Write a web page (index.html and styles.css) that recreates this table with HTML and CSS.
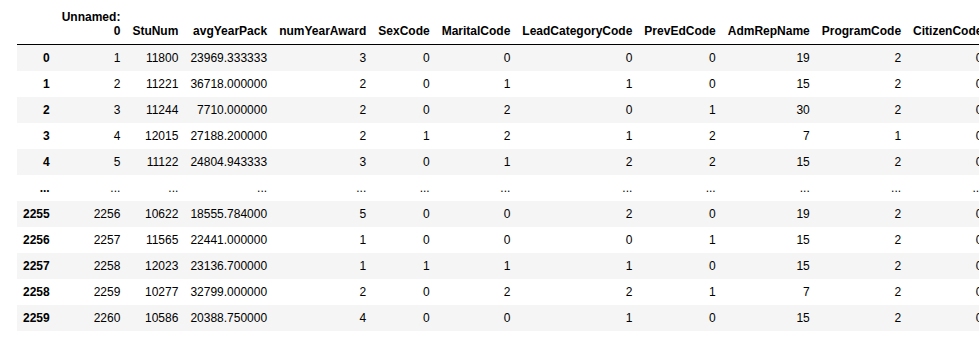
FILE: index.html
```html
<!DOCTYPE html>
<html>
<head>
<meta charset="utf-8">
<link rel="stylesheet" href="styles.css">
</head>
<body>
<div class="output">
<table class="dataframe">
<thead>
<tr><th></th><th>Unnamed:<br>0</th><th>StuNum</th><th>avgYearPack</th><th>numYearAward</th><th>SexCode</th><th>MaritalCode</th><th>LeadCategoryCode</th><th>PrevEdCode</th><th>AdmRepName</th><th>ProgramCode</th><th>CitizenCode</th></tr>
</thead>
<tbody>
<tr><th>0</th><td>1</td><td>11800</td><td>23969.333333</td><td>3</td><td>0</td><td>0</td><td>0</td><td>0</td><td>19</td><td>2</td><td>0</td></tr>
<tr><th>1</th><td>2</td><td>11221</td><td>36718.000000</td><td>2</td><td>0</td><td>1</td><td>1</td><td>0</td><td>15</td><td>2</td><td>0</td></tr>
<tr><th>2</th><td>3</td><td>11244</td><td>7710.000000</td><td>2</td><td>0</td><td>2</td><td>0</td><td>1</td><td>30</td><td>2</td><td>0</td></tr>
<tr><th>3</th><td>4</td><td>12015</td><td>27188.200000</td><td>2</td><td>1</td><td>2</td><td>1</td><td>2</td><td>7</td><td>1</td><td>0</td></tr>
<tr><th>4</th><td>5</td><td>11122</td><td>24804.943333</td><td>3</td><td>0</td><td>1</td><td>2</td><td>2</td><td>15</td><td>2</td><td>0</td></tr>
<tr><th>...</th><td>...</td><td>...</td><td>...</td><td>...</td><td>...</td><td>...</td><td>...</td><td>...</td><td>...</td><td>...</td><td>...</td></tr>
<tr><th>2255</th><td>2256</td><td>10622</td><td>18555.784000</td><td>5</td><td>0</td><td>0</td><td>2</td><td>0</td><td>19</td><td>2</td><td>0</td></tr>
<tr><th>2256</th><td>2257</td><td>11565</td><td>22441.000000</td><td>1</td><td>0</td><td>0</td><td>0</td><td>1</td><td>15</td><td>2</td><td>0</td></tr>
<tr><th>2257</th><td>2258</td><td>12023</td><td>23136.700000</td><td>1</td><td>1</td><td>1</td><td>1</td><td>0</td><td>15</td><td>2</td><td>0</td></tr>
<tr><th>2258</th><td>2259</td><td>10277</td><td>32799.000000</td><td>2</td><td>0</td><td>2</td><td>2</td><td>1</td><td>7</td><td>2</td><td>0</td></tr>
<tr><th>2259</th><td>2260</td><td>10586</td><td>20388.750000</td><td>4</td><td>0</td><td>0</td><td>1</td><td>0</td><td>15</td><td>2</td><td>0</td></tr>
</tbody>
</table>
</div>
</body>
</html>
```
FILE: styles.css
```css
html, body {
  margin: 0;
  padding: 0;
  background: #fff;
  overflow: hidden;
}
.output {
  padding: 4px 0 0 17px;
  width: 2000px;
}
.dataframe {
  border-collapse: collapse;
  border-spacing: 0;
  font-family: "Liberation Sans", Arial, sans-serif;
  font-size: 12px;
  color: #000;
  table-layout: auto;
}
.dataframe th,
.dataframe td {
  padding: 6px 6px;
  line-height: normal;
  text-align: right;
  vertical-align: middle;
  white-space: nowrap;
  border: none;
}
.dataframe th {
  font-weight: bold;
}
.dataframe thead th {
  vertical-align: bottom;
}
.dataframe thead {
  border-bottom: 1px solid #000;
}
.dataframe tbody tr:nth-child(odd) {
  background: #f5f5f5;
}
```
